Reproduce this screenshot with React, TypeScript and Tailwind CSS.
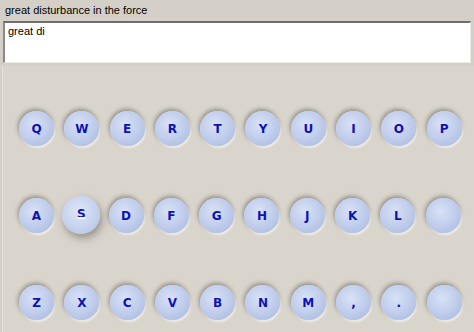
const rows: string[][] = [
  ["Q", "W", "E", "R", "T", "Y", "U", "I", "O", "P"],
  ["A", "S", "D", "F", "G", "H", "J", "K", "L", ""],
  ["Z", "X", "C", "V", "B", "N", "M", ",", ".", ""],
];

function Key({ label }: { label: string }) {
  const pressed = label === "S";
  if (pressed) {
    return (
      <div className="w-[34px] h-[34px] flex items-center justify-center">
        <div className="w-[38px] h-[38px] shrink-0 rounded-full bg-[radial-gradient(circle_at_45%_40%,#dfe6f6_0%,#c6d2ee_55%,#aebde0_100%)] shadow-[2px_4px_8px_rgba(90,85,75,0.55)] flex items-center justify-center relative">
          <span className="text-[12px] font-black text-[#0c12b4] leading-none -mt-[2px]" style={{ fontFamily: "'DejaVu Sans', sans-serif" }}>
            S
          </span>
          <div className="absolute left-[15px] top-[21px] w-[9px] h-[2px] bg-white/90 rounded-full" />
        </div>
      </div>
    );
  }
  return (
    <div className="w-[35px] h-[35px] rounded-full bg-[radial-gradient(circle_at_42%_38%,#d8e1f5_0%,#c0cdec_50%,#a5b5dc_100%)] shadow-[-1px_-2px_4px_rgba(100,95,85,0.6),1px_2px_2px_rgba(255,255,255,0.7)] flex items-center justify-center">
      <span className="text-[12px] font-black text-[#0c12b4] leading-none" style={{ fontFamily: "'DejaVu Sans', sans-serif" }}>
        {label}
      </span>
    </div>
  );
}

export default function App() {
  return (
    <div className="w-[474px] h-[332px] bg-[#d4d0c8] overflow-hidden flex flex-col" style={{ fontFamily: "'Liberation Sans', Arial, sans-serif" }}>
      <div className="px-[5px] pt-[3px] h-[21px] text-[11px] text-black leading-[14px]">
        great disturbance in the force
      </div>
      <div className="mx-[3px] h-[42px] bg-white border-t-2 border-l-2 border-t-[#6e6e6e] border-l-[#8a8a8a] border-b border-r border-b-[#ecebe6] border-r-[#ecebe6] px-[3px] pt-[1px] text-[11px] leading-[14px] text-black">
        great di
      </div>
      <div className="flex-1 mt-[3px] ml-[2px] border-l border-l-[#e4e1da] bg-[#d9d5cd] flex flex-col pl-[16px] pt-[45px] gap-[52px]">
        {rows.map((row, i) => (
          <div key={i} className="flex gap-[10.3px]">
            {row.map((k, j) => (
              <Key key={j} label={k} />
            ))}
          </div>
        ))}
      </div>
    </div>
  );
}
